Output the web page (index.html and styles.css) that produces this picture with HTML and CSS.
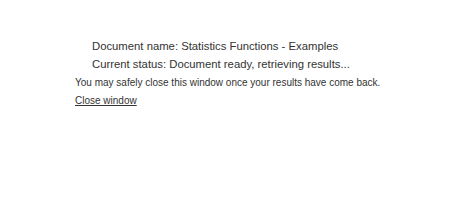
FILE: index.html
```html
<html>
<head>
    <meta charset="UTF-8">
    <title>Retrieving results</title>
    <link rel="stylesheet" href="styles.css">
</head>
<body>
    <div class="container">
        <div class="status">
            <div class="status-line">Document name: Statistics Functions - Examples</div>
            <div class="status-line">Current status: Document ready, retrieving results...</div>
        </div>
        <div class="note">You may safely close this window once your results have come back.</div>
        <div class="close-row"><a class="close-link" href="#">Close window</a></div>
    </div>
</body>
</html>
```

FILE: styles.css
```css
body {
    font-family: 'Liberation Sans', Arial, sans-serif;
    color: #333;
    background-color: #fff;
    margin: 0;
    padding: 0;
}

.container {
    padding: 37px 0 0 75px;
}

.status {
    padding-left: 17px;
}

.status-line {
    font-size: 11.3px;
    line-height: 18px;
}

.note {
    font-size: 10px;
    line-height: 16px;
    margin-top: 2px;
}

.close-row {
    font-size: 10px;
    line-height: 20px;
}

.close-link {
    color: #333;
    text-decoration: underline;
}
```
